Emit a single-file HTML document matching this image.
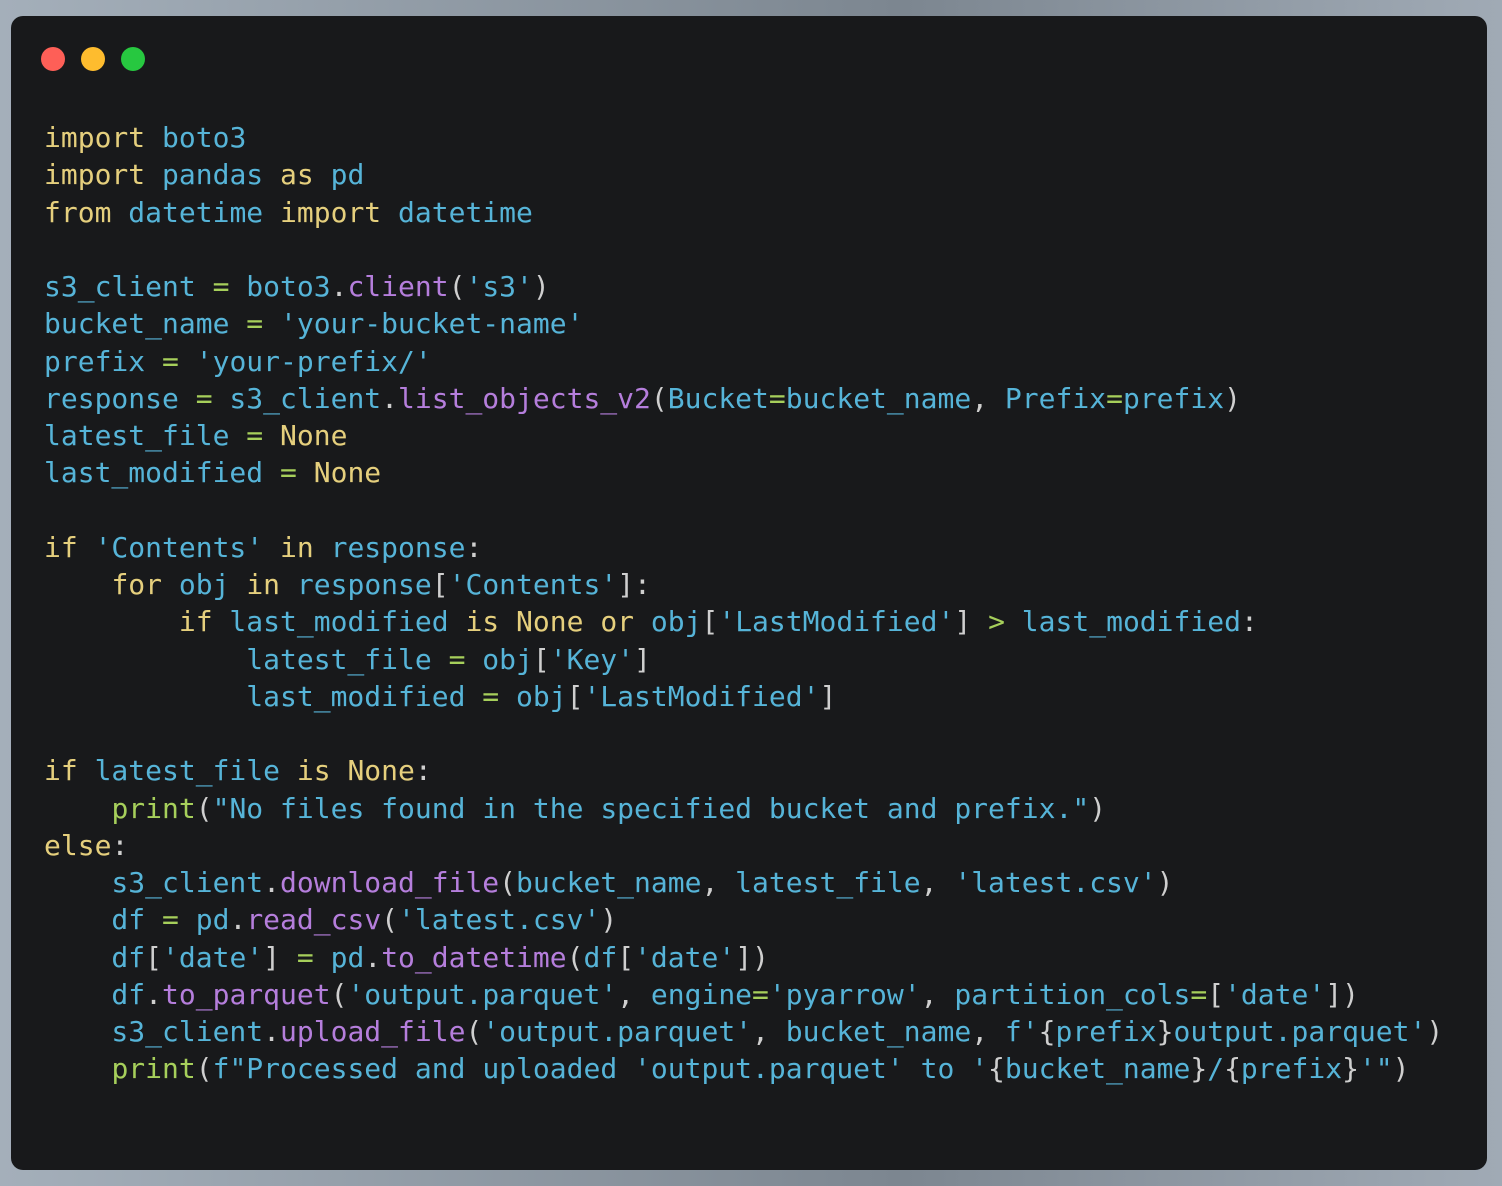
<!DOCTYPE html>
<html><head><meta charset="utf-8"><style>
html,body{margin:0;padding:0;width:1502px;height:1186px;overflow:hidden;background:linear-gradient(90deg,#a4afba,#7c8690 60%,#a0aab5);}
.win{position:absolute;left:11px;top:16px;width:1476px;height:1154px;background:#18191b;border-radius:12px;}
.dot{position:absolute;top:31px;width:24px;height:24px;border-radius:50%;}
pre{position:absolute;left:33px;top:103px;margin:0;font-family:"DejaVu Sans Mono","Liberation Mono",monospace;font-size:28px;line-height:37.25px;color:#56b4d8;}
.k{color:#e5cf7d}.f{color:#b57edc}.g{color:#a6cf5b}.p{color:#cfcfcf}
</style></head><body>
<div class="win">
<div class="dot" style="left:30px;background:#fe5f57"></div>
<div class="dot" style="left:70px;background:#febc2e"></div>
<div class="dot" style="left:110px;background:#27c840"></div>
<pre><span class="k">import</span> boto3
<span class="k">import</span> pandas <span class="k">as</span> pd
<span class="k">from</span> datetime <span class="k">import</span> datetime

s3_client <span class="g">=</span> boto3<span class="p">.</span><span class="f">client</span><span class="p">(</span>'s3'<span class="p">)</span>
bucket_name <span class="g">=</span> 'your-bucket-name'
prefix <span class="g">=</span> 'your-prefix/'
response <span class="g">=</span> s3_client<span class="p">.</span><span class="f">list_objects_v2</span><span class="p">(</span>Bucket<span class="g">=</span>bucket_name<span class="p">,</span> Prefix<span class="g">=</span>prefix<span class="p">)</span>
latest_file <span class="g">=</span> <span class="k">None</span>
last_modified <span class="g">=</span> <span class="k">None</span>

<span class="k">if</span> 'Contents' <span class="k">in</span> response<span class="p">:</span>
    <span class="k">for</span> obj <span class="k">in</span> response<span class="p">[</span>'Contents'<span class="p">]:</span>
        <span class="k">if</span> last_modified <span class="k">is</span> <span class="k">None</span> <span class="k">or</span> obj<span class="p">[</span>'LastModified'<span class="p">]</span> <span class="g">&gt;</span> last_modified<span class="p">:</span>
            latest_file <span class="g">=</span> obj<span class="p">[</span>'Key'<span class="p">]</span>
            last_modified <span class="g">=</span> obj<span class="p">[</span>'LastModified'<span class="p">]</span>

<span class="k">if</span> latest_file <span class="k">is</span> <span class="k">None</span><span class="p">:</span>
    <span class="g">print</span><span class="p">(</span>"No files found in the specified bucket and prefix."<span class="p">)</span>
<span class="k">else</span><span class="p">:</span>
    s3_client<span class="p">.</span><span class="f">download_file</span><span class="p">(</span>bucket_name<span class="p">,</span> latest_file<span class="p">,</span> 'latest.csv'<span class="p">)</span>
    df <span class="g">=</span> pd<span class="p">.</span><span class="f">read_csv</span><span class="p">(</span>'latest.csv'<span class="p">)</span>
    df<span class="p">[</span>'date'<span class="p">]</span> <span class="g">=</span> pd<span class="p">.</span><span class="f">to_datetime</span><span class="p">(</span>df<span class="p">[</span>'date'<span class="p">])</span>
    df<span class="p">.</span><span class="f">to_parquet</span><span class="p">(</span>'output.parquet'<span class="p">,</span> engine<span class="g">=</span>'pyarrow'<span class="p">,</span> partition_cols<span class="g">=</span><span class="p">[</span>'date'<span class="p">])</span>
    s3_client<span class="p">.</span><span class="f">upload_file</span><span class="p">(</span>'output.parquet'<span class="p">,</span> bucket_name<span class="p">,</span> f'<span class="p">{</span>prefix<span class="p">}</span>output.parquet'<span class="p">)</span>
    <span class="g">print</span><span class="p">(</span>f"Processed and uploaded 'output.parquet' to '<span class="p">{</span>bucket_name<span class="p">}</span>/<span class="p">{</span>prefix<span class="p">}</span>'"<span class="p">)</span></pre>
</div>
</body></html>
